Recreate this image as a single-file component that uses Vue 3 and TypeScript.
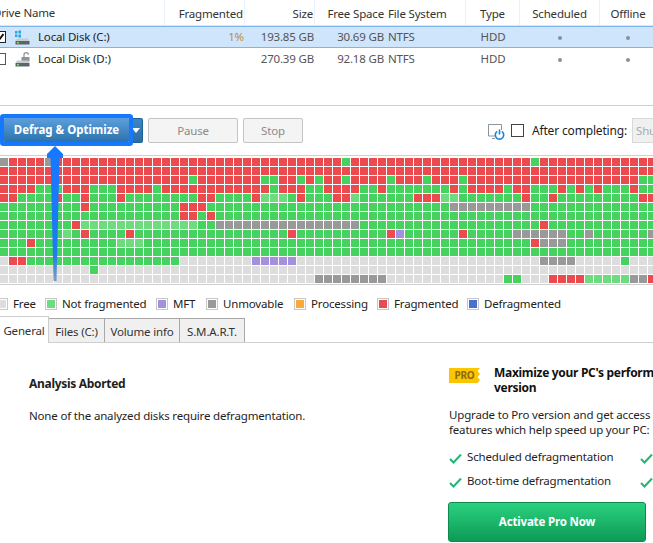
<script setup lang="ts">
const rle: string[] = [
  'a1 r4 a1 r32 g1 r20 g1 r13',
  'r73',
  'r21 g1 r7 g2 r2 g1 r1 g1 r2 g1 r4 g1 r3 g1 r3 g1 r19 g2',
  'r4 g3 r3 g3 r4 g1 r12 g1 r3 g2 r4 g2 r1 g7 r1 g1 r4 g1 r2 g3 r1 g1 r1 g1 r1 g3 r1 g2',
  'r2 g4 r1 g2 r1 g3 r1 g8 r2 g4 r1 l3 g1 r1 g3 r2 l1 g6 r3 l2 g7 r1 g2 r1 g9 r2',
  'g9 r1 g10 r3 g27 a9 g14',
  'g20 r2 g1 r1 g49',
  'g8 r1 l13 g2 a16 g20 r1 g12',
  'g7 l1 g1 r1 g4 r1 g17 r1 g10 r1 p1 g6 r1 g5 a6 g2 a1 g6 a1',
  'g3 r1 g9 l3 g43 r1 a3 g10',
  'g73',
  'f1 r2 g17 f8 p5 f27 a4 f5 g1 f3',
  'f10 g1 f62',
  'f35 a8 f13 g2 f3 r4 l5 a2 r1'
]
const cells: string[] = rle.flatMap((row) =>
  row.split(' ').flatMap((run) => Array<string>(Number(run.slice(1))).fill(run[0]))
)
const legend = [
  { label: 'Free', c: 'f', w: 49 },
  { label: 'Not fragmented', c: 'l', w: 111 },
  { label: 'MFT', c: 'p', w: 50 },
  { label: 'Unmovable', c: 'a', w: 88 },
  { label: 'Processing', c: 'o', w: 83 },
  { label: 'Fragmented', c: 'r', w: 90 },
  { label: 'Defragmented', c: 'b', w: 100 }
]
const disks = [
  { name: 'Local Disk (C:)', frag: '1%', size: '193.85 GB', free: '30.69 GB', fs: 'NTFS', sel: true },
  { name: 'Local Disk (D:)', frag: '', size: '270.39 GB', free: '92.18 GB', fs: 'NTFS', sel: false }
]
</script>

<template>
  <div class="app">
    <section class="table">
      <div class="row head">
        <span class="c name"><span class="drive-title">Drive Name</span></span>
        <span class="c right">Fragmented</span>
        <span class="c right">Size</span>
        <span class="c right nosep">Free Space</span>
        <span class="c fs">File System</span>
        <span class="c mid">Type</span>
        <span class="c mid">Scheduled</span>
        <span class="c mid">Offline</span>
      </div>
      <div v-for="d in disks" :key="d.name" class="row disk" :class="{ sel: d.sel }">
        <span class="c name">
          <span class="chk" :class="{ on: d.sel }">
            <svg v-if="d.sel" width="10" height="10" viewBox="0 0 10 10"><path d="M1.5 5.5 4 8 8.5 2" fill="none" stroke="#111" stroke-width="2" /></svg>
          </span>
          <svg class="ico" width="15" height="15" viewBox="0 0 15 15">
            <template v-if="d.sel">
              <path d="M0 1h2.5v2.5H0zM3.5 .5H6v3H3.5zM0 4.5h2.5V7H0zM3.5 4.5H6v3H3.5z" fill="#25a8e0" />
            </template>
            <template v-else>
              <path d="M9 5V2.8a2.2 2.2 0 0 1 4.4 0" fill="none" stroke="#8b9499" stroke-width="1.2" />
              <rect x="6.5" y="5" width="8" height="4.5" fill="#8b9499" />
            </template>
            <path d="M2 8.5h11l1.5 2.5H.5z" fill="#c6cbce" />
            <rect x=".5" y="11" width="14" height="3.5" fill="#5b6468" />
            <rect x="2" y="12" width="2" height="1.4" fill="#7fe05a" />
          </svg>
          <span>{{ d.name }}</span>
        </span>
        <span class="c right frag">{{ d.frag }}</span>
        <span class="c right dim">{{ d.size }}</span>
        <span class="c right dim">{{ d.free }}</span>
        <span class="c fs dim">{{ d.fs }}</span>
        <span class="c mid dim">HDD</span>
        <span class="c mid"><i class="dot"></i></span>
        <span class="c mid"><i class="dot"></i></span>
      </div>
    </section>

    <section class="toolbar">
      <div class="split">
        <button class="primary">Defrag &amp; Optimize</button>
        <button class="caret"><i></i></button>
      </div>
      <button class="ghost pause">Pause</button>
      <button class="ghost stop">Stop</button>
      <div class="after">
        <svg width="18" height="18" viewBox="0 0 18 18">
          <path d="M8 13H1.5V1.5h13V7" fill="none" stroke="#8a949c" stroke-width="1" />
          <path d="M5 15.5h3" stroke="#8a949c" />
          <path d="M10.2 8.4a4.2 4.2 0 1 0 4.6 0" fill="none" stroke="#1c83d6" stroke-width="1.6" />
          <path d="M12.5 6.5v5" stroke="#1c83d6" stroke-width="1.6" />
        </svg>
        <span class="chk plain"></span>
        <span class="after-label">After completing:</span>
        <span class="select">Shutdown</span>
      </div>
    </section>

    <section class="map">
      <i v-for="(c, i) in cells" :key="i" class="cell" :class="c"></i>
    </section>

    <section class="legend">
      <span v-for="l in legend" :key="l.label" class="leg" :style="{ width: l.w + 'px' }">
        <i class="swatch"><b :class="l.c"></b></i>{{ l.label }}
      </span>
    </section>

    <nav class="tabs">
      <span class="tab active">General</span>
      <span class="tab t2">Files (C:)</span>
      <span class="tab t3">Volume info</span>
      <span class="tab t4">S.M.A.R.T.</span>
    </nav>

    <section class="content">
      <div class="status">
        <h3>Analysis Aborted</h3>
        <p>None of the analyzed disks require defragmentation.</p>
      </div>
      <aside class="promo">
        <div class="promo-head">
          <span class="pro">PRO</span>
          <h4>Maximize your PC's performance with Pro<br />version</h4>
        </div>
        <p class="pitch">Upgrade to Pro version and get access to advanced<br />features which help speed up your PC:</p>
        <ul class="feat">
          <li><svg width="13" height="11" viewBox="0 0 13 11"><path d="M1 6l3.5 3.5L12 1.5" fill="none" stroke="#22b573" stroke-width="2" /></svg>Scheduled defragmentation</li>
          <li class="second"><svg width="13" height="11" viewBox="0 0 13 11"><path d="M1 6l3.5 3.5L12 1.5" fill="none" stroke="#22b573" stroke-width="2" /></svg></li>
          <li><svg width="13" height="11" viewBox="0 0 13 11"><path d="M1 6l3.5 3.5L12 1.5" fill="none" stroke="#22b573" stroke-width="2" /></svg>Boot-time defragmentation</li>
          <li class="second"><svg width="13" height="11" viewBox="0 0 13 11"><path d="M1 6l3.5 3.5L12 1.5" fill="none" stroke="#22b573" stroke-width="2" /></svg></li>
        </ul>
        <button class="activate">Activate Pro Now</button>
      </aside>
    </section>

    <svg class="arrow" width="20" height="136" viewBox="0 0 20 136">
      <defs>
        <linearGradient id="ag" x1="0" y1="0" x2="0" y2="1">
          <stop offset="0" stop-color="#1678ff" />
          <stop offset="0.8" stop-color="#1e7bf0" />
          <stop offset="1" stop-color="#7d9cc0" />
        </linearGradient>
      </defs>
      <path d="M10 0 18 8 18 12 14.5 12 11.5 135 8.5 135 5.5 12 2 12 2 8Z" fill="url(#ag)" />
    </svg>
  </div>
</template>

<style>
html, body { margin: 0; background: #fff; overflow: hidden; }
</style>

<style scoped>
.app {
  position: relative;
  width: 653px;
  height: 543px;
  overflow: hidden;
  background: #fff;
  color: #1e1e1e;
  font: 11.5px/16px "Noto Sans", "Open Sans", sans-serif;
  letter-spacing: -0.17px;
}
.table { height: 105px; border-bottom: 1px solid #cfcfcf; width: 656px; }
.row { display: grid; grid-template-columns: 165px 80px 70px 70px 81px 54px 80px 56px; align-items: center; }
.head { height: 25px; border-bottom: 1px solid #d7e6f5; color: #333; }
.head .c { height: 25px; line-height: 27px; border-right: 1px solid #eaf1f8; box-sizing: border-box; }
.head .nosep { border-right: 0; }
.head .c:last-child { border-right: 0; }
.disk { height: 22px; box-sizing: border-box; }
.disk.sel { background: #cfe5fb; border-top: 1px solid #7fb5ea; border-bottom: 1px solid #7fb5ea; }
.c { display: block; white-space: nowrap; overflow: hidden; }
.right { text-align: right; padding-right: 1px; }
.mid { text-align: center; }
.fs { padding-left: 3px; }
.name { display: flex; align-items: center; }
.disk .name { margin-left: -6px; overflow: visible; }
.drive-title { margin-left: -7px; white-space: nowrap; }
.dim { color: #555; }
.frag { color: #c08a3e; }
.chk {
  flex: none;
  display: inline-flex;
  align-items: center;
  justify-content: center;
  width: 10px;
  height: 10px;
  border: 1px solid #555;
  background: #fff;
}
.chk.on { border-color: #222; }
.ico { margin: 0 8px 0 9px; flex: none; }
.dot { display: inline-block; width: 4px; height: 4px; border-radius: 50%; background: #8a8f94; vertical-align: middle; }

.toolbar { height: 49px; box-sizing: border-box; padding: 12px 0 0 4px; display: flex; align-items: flex-start; }
.split { display: flex; width: 139px; height: 25px; }
button { font: inherit; letter-spacing: inherit; margin: 0; padding: 0; }
.primary {
  width: 125px;
  height: 24px;
  border: 0;
  background: linear-gradient(#5c9fdc, #2b73ad);
  color: #fff;
  font-weight: 700;
  box-shadow: 0 0 0 4px #1678ff;
  border-radius: 1px;
  position: relative;
  z-index: 1;
  letter-spacing: 0;
}
.caret {
  width: 14px;
  height: 25px;
  border: 1px solid #1f6296;
  border-left: 0;
  border-radius: 0 2px 2px 0;
  background: linear-gradient(#3d86c6, #2b6ca3);
  display: flex;
  align-items: center;
  justify-content: flex-end;
  padding-right: 2px;
  box-sizing: border-box;
}
.caret i { border: 4px solid transparent; border-top: 5px solid #fff; border-bottom: 0; }
.ghost { height: 25px; border: 1px solid #c4c4c4; border-radius: 2px; background: #f4f4f4; color: #8a8a8a; box-sizing: border-box; }
.pause { width: 90px; margin-left: 5px; }
.stop { width: 60px; margin-left: 5px; }
.after { margin-left: auto; display: flex; align-items: center; height: 25px; width: 205px; flex: none; margin-right: -39px; }
.after svg { margin-top: 3px; flex: none; }
.plain { width: 11px; height: 11px; margin-left: 6px; border-color: #444; }
.after-label { margin-left: 8px; white-space: nowrap; width: 100px; flex: none; font-size: 12px; }
.select { box-sizing: border-box; height: 25px; line-height: 23px; padding-left: 3px; flex: none; width: 60px; background: #f0f0f0; border: 1px solid #d9d9d9; color: #aaa; overflow: hidden; }

.map {
  height: 126px;
  padding: 2px 0 0;
  border-top: 1px solid #cfcfcf;
  border-bottom: 1px solid #cfcfcf;
  display: grid;
  grid-template-columns: repeat(73, 8px);
  grid-auto-rows: 8px;
  gap: 1px;
  align-content: start;
}
.cell { display: block; width: 8px; height: 8px; }
.r { background: #eb4b4f; }
.g { background: #45d25e; }
.l { background: #6fdb80; }
.a { background: #999; }
.f { background: #ddd; }
.p { background: #a391df; }
.o { background: #fba93a; }
.b { background: #4a6fd0; }

.legend { height: 31px; display: flex; align-items: center; margin-left: -4px; box-sizing: border-box; padding-top: 7px; }
.leg { display: flex; align-items: center; flex: none; white-space: nowrap; color: #222; }
.swatch { flex: none; box-sizing: border-box; width: 12px; height: 12px; border: 1px solid #c8c8c8; padding: 1px; margin-right: 5px; background: #fff; }
.swatch b { display: block; width: 8px; height: 8px; }

.tabs { height: 27px; display: flex; align-items: flex-end; border-bottom: 1px solid #cfcfcf; box-sizing: border-box; }
.tab { box-sizing: border-box; height: 24px; line-height: 25px; text-align: center; background: #f0f0f0; border: 1px solid #a8a8a8; border-left: 0; border-bottom: 0; color: #333; white-space: nowrap; }
.active { width: 49px; height: 27px; margin-bottom: -1px; line-height: 26px; background: #fff; border-color: #ccc; padding-top: 1px; }
.t2 { width: 56px; }
.t3 { width: 75px; }
.t4 { width: 65px; }

.content { display: flex; }
.status { width: 449px; flex: none; padding: 33px 0 0 29px; box-sizing: border-box; }
.status h3 { margin: 0; font-size: 12px; line-height: 16px; font-weight: 700; letter-spacing: -0.3px; }
.status p { margin: 16px 0 0; white-space: nowrap; }
.promo { width: 204px; flex: none; padding-top: 22px; white-space: nowrap; }
.promo-head { display: flex; align-items: flex-start; }
.pro {
  flex: none;
  width: 31px;
  height: 15px;
  margin: 3px 14px 0 0;
  background: #fdc500;
  color: #8a6a10;
  font-size: 10px;
  line-height: 15px;
  font-weight: 700;
  text-align: center;
  clip-path: polygon(0 0, 100% 0, 92% 20%, 100% 40%, 92% 60%, 100% 80%, 92% 100%, 0 100%);
}
.promo-head h4 { margin: 0; font-size: 12px; line-height: 15px; font-weight: 700; color: #111; letter-spacing: -0.3px; }
.pitch { margin: 12px 0 0; line-height: 15px; }
.feat { list-style: none; margin: 8px 0 0; padding: 0; display: grid; grid-template-columns: 191px 20px; grid-auto-rows: 24px; align-items: center; }
.feat li { display: flex; align-items: center; }
.feat svg { flex: none; margin-right: 5px; margin-top: 3px; }
.activate {
  display: block;
  margin: 9px 0 0 -1px;
  width: 198px;
  height: 40px;
  border: 1px solid #0d8a4e;
  border-radius: 3px;
  background: linear-gradient(#2ad17f, #0d9b55);
  color: #fff;
  font-weight: 700;
  box-sizing: border-box;
}
.arrow { position: absolute; left: 45px; top: 146px; z-index: 2; }
</style>
